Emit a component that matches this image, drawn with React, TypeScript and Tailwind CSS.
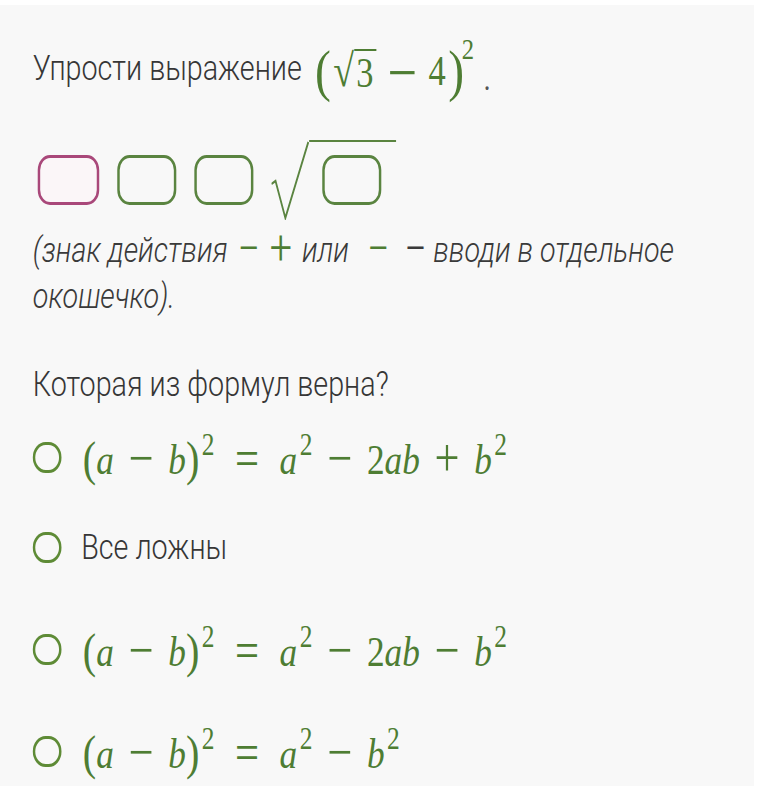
import React from 'react';

// The reference is horizontally squashed (~0.82), so content is laid out at
// full width and squeezed with scale-x on one wrapper.

const SANS = { fontFamily: 'Roboto, "Noto Sans", sans-serif' };
const SERIF = { fontFamily: '"Liberation Serif", "DejaVu Serif", serif' };

function Sup({ children }: { children: React.ReactNode }) {
  return <span className="relative -top-[19px] text-[31px] not-italic ml-[3px]">{children}</span>;
}

function Radio() {
  return <span className="block w-[35px] h-[31px] rounded-full border-[3px] border-[#5e8b36] flex-shrink-0" />;
}

function Box({ pink }: { pink?: boolean }) {
  return (
    <span
      className={
        pink
          ? 'block w-[75px] h-[50px] rounded-[15px] border-[3px] border-[#a9487a] bg-[#fbf6f8]'
          : 'block w-[72px] h-[50px] rounded-[15px] border-[3px] border-[#5a8440]'
      }
    />
  );
}

const Op = ({ c }: { c: string }) => (
  <span className="not-italic text-[54px] leading-[0] relative top-[2px] mx-[18px]">{c}</span>
);
const Eq = () => <span className="not-italic text-[52px] leading-[0] relative top-[2px] mx-[25px]">=</span>;
const Open = () => <span className="not-italic text-[49px] relative top-[1px]">(</span>;
const Close = () => <span className="not-italic text-[49px] relative top-[1px]">)</span>;

function Formula({ children }: { children: React.ReactNode }) {
  return (
    <span className="ml-[26px] text-[43px] text-[#4e7d33] italic leading-none whitespace-nowrap" style={SERIF}>
      {children}
    </span>
  );
}

function Option({ children, className }: { children: React.ReactNode; className?: string }) {
  return <label className={'flex items-center h-[50px] ' + (className ?? '')}>{children}</label>;
}

export default function App() {
  return (
    <div className="w-[764px] h-[786px] bg-white pt-[5px] pr-[10px] overflow-hidden">
      <div className="h-full bg-[#f8f8f8] overflow-hidden">
        <div className="w-[920px] origin-top-left scale-x-[0.82] pl-[40px] text-[#363636]" style={SANS}>
          {/* Task */}
          <div className="pt-[34px] h-[95px] flex items-start">
            <span className="text-[35px] font-light leading-none mt-[12px]">Упрости выражение</span>
            <span className="ml-[16px] flex items-center text-[#4e7d33] leading-none" style={SERIF}>
              <span className="text-[58px]">(</span>
              <span className="text-[46px] ml-[3px]">√</span>
              <span className="text-[42px] border-t-[2px] border-[#4e7d33] pt-[1px] pl-[3px] pr-[3px]">3</span>
              <span className="text-[64px] mx-[14px] relative top-[2px]">−</span>
              <span className="text-[42px]">4</span>
              <span className="text-[58px] ml-[3px]">)</span>
              <span className="text-[30px] -ml-[3px] relative -top-[22px]">2</span>
              <span className="text-[32px] ml-[12px] text-[#555] relative top-[8px]">.</span>
            </span>
          </div>

          {/* Input boxes */}
          <div className="mt-[40px] flex items-start">
            <div className="flex items-center gap-[22px] pl-[6px] pt-[15px]">
              <Box pink />
              <Box />
              <Box />
            </div>
            <svg width="46" height="80" viewBox="0 0 46 80" className="ml-[22px]" fill="none">
              <path d="M0 44 L5 41 L17 78 L45 2" stroke="#5a8440" strokeWidth="2.2" />
            </svg>
            <div className="border-t-[2px] border-[#5a8440] w-[106px] h-[80px] pt-[13px] pl-[16px]">
              <Box />
            </div>
          </div>

          {/* Hint */}
          <p className="mt-[8px] text-[35px] italic font-light leading-[46px] text-[#3a3a3a] w-[860px]">
            (знак действия
            <span className="text-[#4e7d33] not-italic text-[48px] leading-[0] relative top-[3px] ml-[12px]">−</span>
            <span className="text-[#4e7d33] not-italic text-[48px] leading-[0] relative top-[2px] ml-[12px]">+</span>
            <span className="ml-[12px]">или</span>
            <span className="text-[#4e7d33] not-italic text-[48px] leading-[0] relative top-[3px] ml-[22px]">−</span>
            <span className="not-italic text-[48px] leading-[0] relative top-[3px] ml-[18px]">−</span>
            <span className="ml-[8px]">вводи в отдельное окошечко).</span>
          </p>

          {/* Question */}
          <p className="mt-[47px] text-[35px] font-light leading-none">Которая из формул верна?</p>

          <div className="mt-[30px] flex flex-col">
            <Option>
              <Radio />
              <Formula>
                <Open />a<Op c="−" />b<Close />
                <Sup>2</Sup>
                <Eq />a<Sup>2</Sup>
                <Op c="−" />
                <span className="not-italic">2</span>ab<Op c="+" />b<Sup>2</Sup>
              </Formula>
            </Option>

            <Option className="mt-[40px]">
              <Radio />
              <span className="ml-[24px] text-[35px] font-light leading-none">Все ложны</span>
            </Option>

            <Option className="mt-[52px]">
              <Radio />
              <Formula>
                <Open />a<Op c="−" />b<Close />
                <Sup>2</Sup>
                <Eq />a<Sup>2</Sup>
                <Op c="−" />
                <span className="not-italic">2</span>ab<Op c="−" />b<Sup>2</Sup>
              </Formula>
            </Option>

            <Option className="mt-[52px]">
              <Radio />
              <Formula>
                <Open />a<Op c="−" />b<Close />
                <Sup>2</Sup>
                <Eq />a<Sup>2</Sup>
                <Op c="−" />b<Sup>2</Sup>
              </Formula>
            </Option>
          </div>
        </div>
      </div>
    </div>
  );
}
